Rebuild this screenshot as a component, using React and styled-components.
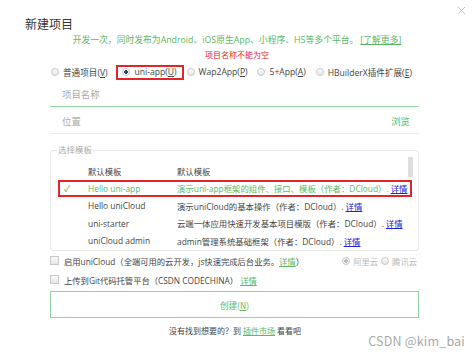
import React from 'react';
import styled, { createGlobalStyle } from 'styled-components';

const GlobalStyle = createGlobalStyle`
	html, body {
		margin: 0;
		padding: 0;
		background: #ffffff;
	}
	body {
		font-family: 'Open Sans', 'Noto Sans CJK SC', sans-serif;
		color: #333;
	}
`;

const green = '#5cb864';

const templates = [
	{ name: 'Hello uni-app', desc: '演示uni-app框架的组件、接口、模板（作者：DCloud）.', active: true },
	{ name: 'Hello uniCloud', desc: '演示uniCloud的基本操作（作者：DCloud）.' },
	{ name: 'uni-starter', desc: '云端一体应用快速开发基本项目模版（作者：DCloud）.' },
	{ name: 'uniCloud admin', desc: 'admin管理系统基础框架（作者：DCloud）.' },
];

const projectTypes = [
	{ label: '普通项目', key: 'V' },
	{ label: 'uni-app', key: 'U', checked: true },
	{ label: 'Wap2App', key: 'P' },
	{ label: '5+App', key: 'A' },
	{ label: 'HBuilderX插件扩展', key: 'E' },
];

const App = () => {
	return (
		<>
			<GlobalStyle />
			<Dialog>
				<Header>
					<Title>新建项目</Title>
					<CloseButton>
						<svg width="9" height="9" viewBox="0 0 9 9">
							<path d="M1 1 L8 8 M8 1 L1 8" stroke="#c4c4c4" strokeWidth="1" />
						</svg>
					</CloseButton>
				</Header>
				<Intro>
					开发一次，同时发布为Android、iOS原生App、小程序、H5等多个平台。
					<IntroLink>[了解更多]</IntroLink>
				</Intro>
				<ErrorText>项目名称不能为空</ErrorText>

				<Body>
					<RadioRow>
						{projectTypes.map((type) => (
							<RadioItem key={type.key} $highlight={type.checked}>
								<RadioDot $checked={type.checked} />
								<span>
									{type.label}(<u>{type.key}</u>)
								</span>
							</RadioItem>
						))}
					</RadioRow>

					<Field $focused>
						<Placeholder>项目名称</Placeholder>
					</Field>
					<Field>
						<Placeholder>位置</Placeholder>
						<Browse>浏览</Browse>
					</Field>

					<TemplateBox>
						<Legend>选择模板</Legend>
						<ListWrap>
							<TemplateRow $header>
								<CheckCell />
								<NameCell>默认模板</NameCell>
								<DescCell>默认模板</DescCell>
							</TemplateRow>
							{templates.map((t) => (
								<TemplateRow key={t.name} $active={t.active}>
									<CheckCell>{t.active ? '✓' : ''}</CheckCell>
									<NameCell>{t.name}</NameCell>
									<DescCell>
										{t.desc}
										<DetailLink>详情</DetailLink>
									</DescCell>
								</TemplateRow>
							))}
							<ScrollThumb />
						</ListWrap>
					</TemplateBox>

					<CheckRow>
						<CheckBox />
						<span>
							启用uniCloud（全端可用的云开发，js快速完成后台业务。
							<GreenLink>详情</GreenLink>）
						</span>
						<CloudChoice>
							<RadioDot $checked $muted />
							<span>阿里云</span>
							<RadioDot $muted />
							<span>腾讯云</span>
						</CloudChoice>
					</CheckRow>
					<CheckRow>
						<CheckBox />
						<span>
							上传到Git代码托管平台（CSDN CODECHINA） <GreenLink>详情</GreenLink>
						</span>
					</CheckRow>

					<CreateButton>
						创建(<u>N</u>)
					</CreateButton>
				</Body>

				<Footer>
					没有找到想要的？到 <GreenLink>插件市场</GreenLink> 看看吧
				</Footer>
				<Watermark>CSDN @kim_bai</Watermark>
			</Dialog>
		</>
	);
};

// Styled Components
const Dialog = styled.div`
	position: relative;
	width: 474px;
	height: 356px;
	box-sizing: border-box;
	background: #fff;
	overflow: hidden;
`;

const Header = styled.div`
	display: flex;
	justify-content: space-between;
	align-items: flex-start;
	padding: 4px 8px 0 25px;
	height: 28px;
	box-sizing: border-box;
`;

const Title = styled.h1`
	margin: 13px 0 0;
	font-size: 12px;
	font-weight: normal;
	line-height: 14px;
	color: #333;
	font-family: 'Noto Sans CJK SC', sans-serif;
`;

const CloseButton = styled.div`
	width: 9px;
	height: 9px;
	margin-top: 2px;
	display: flex;
`;

const Intro = styled.div`
	text-align: center;
	font-size: 8.8px;
	line-height: 14px;
	height: 14px;
	margin-top: 5px;
	color: ${green};
	white-space: nowrap;
`;

const IntroLink = styled.span`
	text-decoration: underline;
	margin-left: 2px;
`;

const ErrorText = styled.div`
	text-align: center;
	font-size: 8px;
	line-height: 14px;
	height: 14px;
	margin-top: 1px;
	color: #e42a2a;
`;

const Body = styled.div`
	width: 369px;
	margin-left: 50px;
	display: flex;
	flex-direction: column;
`;

const RadioRow = styled.div`
	display: flex;
	justify-content: space-between;
	align-items: center;
	height: 16px;
	margin-top: 2px;
	font-size: 8.6px;
	color: #444;
	white-space: nowrap;
`;

const RadioItem = styled.label`
	display: flex;
	align-items: center;
	gap: 4px;
	height: 15px;
	box-sizing: border-box;
	padding: 0 5px 0 0;
	border: 2px solid ${(p) => (p.$highlight ? '#e0262b' : 'transparent')};
	padding-left: ${(p) => (p.$highlight ? '4px' : '0')};
	margin-left: ${(p) => (p.$highlight ? '0' : '-1px')};
`;

const RadioDot = styled.span`
	width: 8px;
	height: 8px;
	flex: none;
	border-radius: 50%;
	box-sizing: border-box;
	border: 1px solid #c8c8c8;
	background: ${(p) =>
		p.$checked
			? `radial-gradient(circle, ${p.$muted ? '#bbb' : '#2d4a6b'} 0 1.7px, #f4f4f4 2.1px)`
			: 'linear-gradient(#fafafa, #e8e8e8)'};
`;

const Field = styled.div`
	display: flex;
	justify-content: space-between;
	align-items: flex-end;
	height: 27px;
	box-sizing: border-box;
	padding: 0 9px 5px 12px;
	border-bottom: 1px solid ${(p) => (p.$focused ? '#93d6a0' : '#ececec')};
	font-size: 9.4px;
	line-height: 12px;
`;

const Placeholder = styled.span`
	color: #aaa;
`;

const Browse = styled.span`
	color: ${green};
`;

const TemplateBox = styled.fieldset`
	margin: 11px 0 0;
	padding: 2px 6px 0 7px;
	border: 1px solid #e6e6e6;
	border-radius: 3px;
	height: 106px;
	box-sizing: border-box;
	overflow: hidden;
`;

const Legend = styled.legend`
	font-size: 8.5px;
	line-height: 10px;
	color: #aaa;
	padding: 0 1px;
	margin-left: -1px;
`;

const ListWrap = styled.div`
	position: relative;
	padding-top: 5px;
`;

const TemplateRow = styled.div`
	display: flex;
	align-items: center;
	height: 17.5px;
	box-sizing: border-box;
	font-size: 8.4px;
	white-space: nowrap;
	color: ${(p) => (p.$active ? green : '#444')};
	border: 2px solid ${(p) => (p.$active ? '#e0262b' : 'transparent')};
	width: 354px;
`;

const CheckCell = styled.span`
	width: 24px;
	flex: none;
	padding-left: 4px;
	font-size: 9px;
	color: ${green};
`;

const NameCell = styled.span`
	width: 89px;
	flex: none;
`;

const DescCell = styled.span`
	flex: 1;
`;

const DetailLink = styled.span`
	color: #2020e0;
	text-decoration: underline;
	margin-left: 2px;
`;

const ScrollThumb = styled.div`
	position: absolute;
	top: 0;
	left: 350px;
	width: 5px;
	height: 20px;
	background: #dedede;
`;

const CheckRow = styled.div`
	display: flex;
	align-items: center;
	gap: 4px;
	height: 19px;
	font-size: 8.3px;
	color: #444;
	white-space: nowrap;
	&:first-of-type {
		margin-top: 6px;
	}
`;

const CheckBox = styled.span`
	width: 7px;
	height: 7px;
	flex: none;
	border: 1px solid #c8c8c8;
	background: linear-gradient(#fafafa, #e6e6e6);
	margin-right: 1px;
`;

const CloudChoice = styled.span`
	margin-left: auto;
	margin-right: 2px;
	display: flex;
	align-items: center;
	gap: 3px;
	color: #bbb;
`;

const GreenLink = styled.span`
	color: ${green};
	text-decoration: underline;
`;

const CreateButton = styled.button`
	margin-top: 2px;
	height: 27px;
	width: 369px;
	background: #fff;
	border: 1px solid #8fd49c;
	color: ${green};
	font-family: 'Noto Sans CJK SC', sans-serif;
	font-size: 8.6px;
	cursor: pointer;
`;

const Footer = styled.div`
	text-align: center;
	font-size: 8px;
	line-height: 12px;
	margin-top: 7px;
	padding-right: 4px;
	color: #444;
`;

const Watermark = styled.div`
	position: absolute;
	right: 9px;
	bottom: 6px;
	font-family: 'Noto Sans CJK SC', sans-serif;
	font-size: 12.5px;
	color: #a8a8a8;
	letter-spacing: 0.2px;
`;

export default App;
